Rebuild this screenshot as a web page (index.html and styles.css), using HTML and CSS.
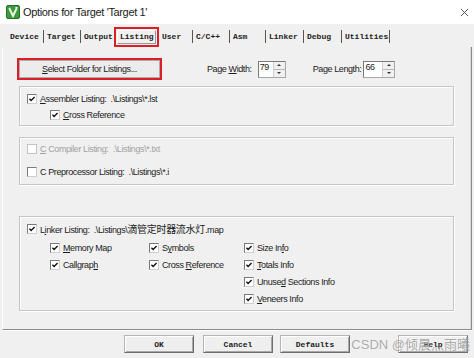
FILE: index.html
```html
<!DOCTYPE html>
<html lang="en">
<head>
  <meta charset="UTF-8">
  <meta name="viewport" content="width=device-width, initial-scale=1.0">
  <title>Options for Target 'Target 1'</title>
  <link rel="stylesheet" href="styles.css">
</head>
<body>
  <div class="dialog">
    <div class="titlebar">
      <svg class="app-icon" viewBox="0 0 14 14" aria-hidden="true">
        <rect x="0.5" y="0.5" width="13" height="13" rx="1.5" fill="#3c9a3c" stroke="#2b6f2b"/>
        <path d="M3.2 3 L7 11 L10.8 3" fill="none" stroke="#eaf6e2" stroke-width="2"/>
        <path d="M9.5 2.5 L11.5 2.5" stroke="#fff" stroke-width="1"/>
      </svg>
      <span class="title">Options for Target 'Target 1'</span>
      <svg class="close" viewBox="0 0 10 10" aria-label="Close">
        <path d="M1 1 L9 9 M9 1 L1 9" stroke="#444" stroke-width="1"/>
      </svg>
    </div>

    <div class="tabs">
      <span class="tab tab-device">Device</span>
      <span class="tab tab-target">Target</span>
      <span class="tab tab-output">Output</span>
      <span class="tab tab-listing">Listing</span>
      <span class="tab tab-user">User</span>
      <span class="tab tab-cpp">C/C++</span>
      <span class="tab tab-asm">Asm</span>
      <span class="tab tab-linker">Linker</span>
      <span class="tab tab-debug">Debug</span>
      <span class="tab tab-utilities">Utilities</span>
    </div>

    <div class="panel">
      <div class="top-row">
        <button class="btn-select"><u>S</u>elect Folder for Listings...</button>
        <span class="page-label label-width">Page <u>W</u>idth:</span>
        <div class="spin spin-width">
          <span class="spin-value">79</span>
          <span class="spin-arrows"><i class="arrow-up"></i><i class="arrow-down"></i></span>
        </div>
        <span class="page-label label-length">Pa<u>g</u>e Length:</span>
        <div class="spin spin-length">
          <span class="spin-value">66</span>
          <span class="spin-arrows"><i class="arrow-up"></i><i class="arrow-down"></i></span>
        </div>
      </div>

      <div class="group group-asm">
        <div class="check-row">
          <span class="cb checked"><svg viewBox="0 0 10 10"><path d="M1.8 4.6 L3.9 6.8 L8.2 2.4"/></svg></span>
          <span><u>A</u>ssembler Listing:&nbsp; .\Listings\*.lst</span>
        </div>
        <div class="check-row indent">
          <span class="cb checked"><svg viewBox="0 0 10 10"><path d="M1.8 4.6 L3.9 6.8 L8.2 2.4"/></svg></span>
          <span><u>C</u>ross Reference</span>
        </div>
      </div>

      <div class="group group-c">
        <div class="check-row disabled">
          <span class="cb"></span>
          <span><u>C</u> Compiler Listing:&nbsp; .\Listings\*.txt</span>
        </div>
        <div class="check-row">
          <span class="cb"></span>
          <span>C Preprocessor Listing:&nbsp; .\Listings\*.i</span>
        </div>
      </div>

      <div class="group group-linker">
        <div class="check-row">
          <span class="cb checked"><svg viewBox="0 0 10 10"><path d="M1.8 4.6 L3.9 6.8 L8.2 2.4"/></svg></span>
          <span>L<u>i</u>nker Listing:&nbsp; .\Listings\<span class="cjk">滴管定时器流水灯</span>.map</span>
        </div>
        <div class="sub-options">
          <div class="col col-first">
            <div class="check-row">
              <span class="cb checked"><svg viewBox="0 0 10 10"><path d="M1.8 4.6 L3.9 6.8 L8.2 2.4"/></svg></span>
              <span><u>M</u>emory Map</span>
            </div>
            <div class="check-row">
              <span class="cb checked"><svg viewBox="0 0 10 10"><path d="M1.8 4.6 L3.9 6.8 L8.2 2.4"/></svg></span>
              <span>Callgrap<u>h</u></span>
            </div>
          </div>
          <div class="col col-second">
            <div class="check-row">
              <span class="cb checked"><svg viewBox="0 0 10 10"><path d="M1.8 4.6 L3.9 6.8 L8.2 2.4"/></svg></span>
              <span>S<u>y</u>mbols</span>
            </div>
            <div class="check-row">
              <span class="cb checked"><svg viewBox="0 0 10 10"><path d="M1.8 4.6 L3.9 6.8 L8.2 2.4"/></svg></span>
              <span>Cross <u>R</u>eference</span>
            </div>
          </div>
          <div class="col">
            <div class="check-row">
              <span class="cb checked"><svg viewBox="0 0 10 10"><path d="M1.8 4.6 L3.9 6.8 L8.2 2.4"/></svg></span>
              <span>Size In<u>f</u>o</span>
            </div>
            <div class="check-row">
              <span class="cb checked"><svg viewBox="0 0 10 10"><path d="M1.8 4.6 L3.9 6.8 L8.2 2.4"/></svg></span>
              <span><u>T</u>otals Info</span>
            </div>
            <div class="check-row">
              <span class="cb checked"><svg viewBox="0 0 10 10"><path d="M1.8 4.6 L3.9 6.8 L8.2 2.4"/></svg></span>
              <span>Unuse<u>d</u> Sections Info</span>
            </div>
            <div class="check-row">
              <span class="cb checked"><svg viewBox="0 0 10 10"><path d="M1.8 4.6 L3.9 6.8 L8.2 2.4"/></svg></span>
              <span><u>V</u>eneers Info</span>
            </div>
          </div>
        </div>
      </div>
    </div>

    <div class="buttons">
      <button class="btn btn-ok">OK</button>
      <button class="btn btn-cancel">Cancel</button>
      <button class="btn btn-defaults">Defaults</button>
      <button class="btn btn-help">Help</button>
    </div>

    <div class="watermark">CSDN @倾晨灬雨曦</div>
  </div>
</body>
</html>
```

FILE: styles.css
```css
body {
  margin: 0;
  background: #f0f0f0;
  font-family: "Liberation Sans", Arial, sans-serif;
  color: #1c1c1c;
}
.dialog {
  position: relative;
  width: 474px;
  height: 358px;
  overflow: hidden;
}

/* title bar */
.titlebar {
  height: 24px;
  background: #fff;
  display: flex;
  align-items: center;
  padding-left: 6px;
}
.app-icon {
  width: 14px;
  height: 14px;
  margin-right: 3px;
}
.title {
  flex: 1;
  font-size: 11px;
  letter-spacing: -0.35px;
  color: #1a1a1a;
}
.close {
  width: 9px;
  height: 9px;
  margin-right: 5px;
}

/* tab strip */
.tabs {
  display: flex;
  align-items: center;
  height: 15px;
  margin-top: 5px;
  padding-left: 7px;
  font-family: "Liberation Mono", "Courier New", monospace;
  font-weight: bold;
  font-size: 8px;
  color: #222;
}
.tab {
  box-sizing: border-box;
  height: 13px;
  line-height: 13px;
  padding-left: 3px;
  border-right: 1px solid #555;
}
.tab-device { width: 37px; }
.tab-target { width: 37px; }
.tab-output { width: 33px; border-right: none; }
.tab-listing {
  width: 39px;
  height: 14px;
  line-height: 12px;
  margin: 0 3px;
  padding-left: 2px;
  border: 1px solid #9a9a9a;
  border-top-color: #fff;
  border-left-color: #fff;
  outline: 2px solid #dc1f26;
  outline-offset: 1px;
}
.tab-user { width: 34px; }
.tab-cpp { width: 37px; }
.tab-asm { width: 36px; }
.tab-linker { width: 38px; }
.tab-debug { width: 38px; }
.tab-utilities { width: 48px; }

/* tab page */
.panel {
  box-sizing: border-box;
  width: 470px;
  height: 283px;
  margin: 3px 0 0 2px;
  padding: 13px 0 0 16px;
  border-left: 1px solid #fff;
  border-right: 1px solid #8a8a8a;
  border-bottom: 1px solid #8a8a8a;
  box-shadow: inset -1px 0 #d8d8d8, 0 1px #fff;
  font-size: 9px;
  letter-spacing: -0.4px;
}

.top-row {
  display: flex;
  align-items: center;
  height: 18px;
}
.btn-select {
  box-sizing: border-box;
  width: 141px;
  height: 18px;
  padding: 0;
  font-family: inherit;
  font-size: 9px;
  letter-spacing: -0.4px;
  color: #1c1c1c;
  background: #ececec;
  border: 1px solid #adadad;
  outline: 2px solid #dc1f26;
  outline-offset: 0;
}
.page-label {
  white-space: nowrap;
}
.label-width { margin-left: 47px; }
.label-length { margin-left: 27px; }
.spin {
  box-sizing: border-box;
  display: flex;
  height: 17px;
  margin-left: 6px;
  background: #fff;
  border: 1px solid #a8a8a8;
  border-top-color: #7a7a7a;
  border-left-color: #7a7a7a;
}
.spin-width { width: 28px; }
.spin-length { width: 32px; margin-left: 2px; }
.spin-value {
  flex: 1;
  padding-left: 1px;
  line-height: 11px;
}
.spin-arrows {
  display: flex;
  flex-direction: column;
  width: 11px;
  background: #f0f0f0;
  border-left: 1px solid #d0d0d0;
}
.spin-arrows i {
  flex: 1;
  display: flex;
  align-items: center;
  justify-content: center;
}
.arrow-up {
  border-bottom: 1px solid #b8b8b8;
}
.arrow-up::after,
.arrow-down::after {
  content: "";
  border-left: 2px solid transparent;
  border-right: 2px solid transparent;
}
.arrow-up::after { border-bottom: 2px solid #333; }
.arrow-down::after { border-top: 2px solid #333; }

/* group boxes */
.group {
  box-sizing: border-box;
  width: 435px;
  border: 1px solid #c6c6c6;
  box-shadow: inset 1px 1px #fff, 1px 1px #fff;
  padding-left: 7px;
  display: flex;
  flex-direction: column;
}
.group-asm {
  margin-top: 8px;
  padding-top: 6px;
  padding-bottom: 4px;
  gap: 4px;
}
.group-c {
  margin-top: 11px;
  padding-top: 5px;
  padding-bottom: 6px;
  gap: 11px;
}
.group-linker {
  margin-top: 31px;
  padding-top: 6px;
  padding-bottom: 5px;
}

.check-row {
  display: flex;
  align-items: center;
  height: 12px;
  line-height: 12px;
  white-space: nowrap;
  font-family: "Liberation Sans", "Noto Sans CJK SC", sans-serif;
}
.check-row.indent { margin-left: 23px; }
.check-row.disabled { color: #a2a2a2; }
.check-row.disabled .cb { border-color: #c4c4c4; }
.cjk {
  font-family: "Noto Sans CJK SC", sans-serif;
  font-size: 10px;
  letter-spacing: -0.3px;
}
.cb {
  box-sizing: border-box;
  width: 10px;
  height: 10px;
  margin-right: 3px;
  flex-shrink: 0;
  background: #fff;
  border: 1px solid #7a7a7a;
  border-right-color: #cfcfcf;
  border-bottom-color: #cfcfcf;
}
.cb svg {
  display: block;
  width: 8px;
  height: 8px;
}
.cb path {
  fill: none;
  stroke: #111;
  stroke-width: 1.7;
}

.sub-options {
  display: flex;
  margin-top: 7px;
  margin-left: 23px;
}
.col {
  display: flex;
  flex-direction: column;
  gap: 5px;
}
.col-first { width: 99px; }
.col-second { width: 95px; }

/* dialog buttons */
.buttons {
  display: flex;
  margin-top: 5px;
  padding-left: 124px;
}
.btn {
  box-sizing: border-box;
  width: 70px;
  height: 18px;
  padding: 0;
  font-family: "Liberation Mono", "Courier New", monospace;
  font-weight: bold;
  font-size: 8px;
  color: #222;
  background: #efefef;
  border: 1px solid;
  border-color: #b4b4b4 #6d6d6d #6d6d6d #b4b4b4;
  box-shadow: inset 1px 1px #fff, inset -1px -1px #a8a8a8;
}
.btn-cancel { margin-left: 9px; }
.btn-defaults { margin-left: 7px; }
.btn-help { margin-left: 48px; }

.watermark {
  position: absolute;
  right: 4px;
  bottom: 5px;
  font-family: "Liberation Sans", "Noto Sans CJK SC", sans-serif;
  font-size: 13px;
  color: rgba(150, 150, 150, 0.8);
  text-shadow: 0 0 2px rgba(255, 255, 255, 0.6);
}
```
